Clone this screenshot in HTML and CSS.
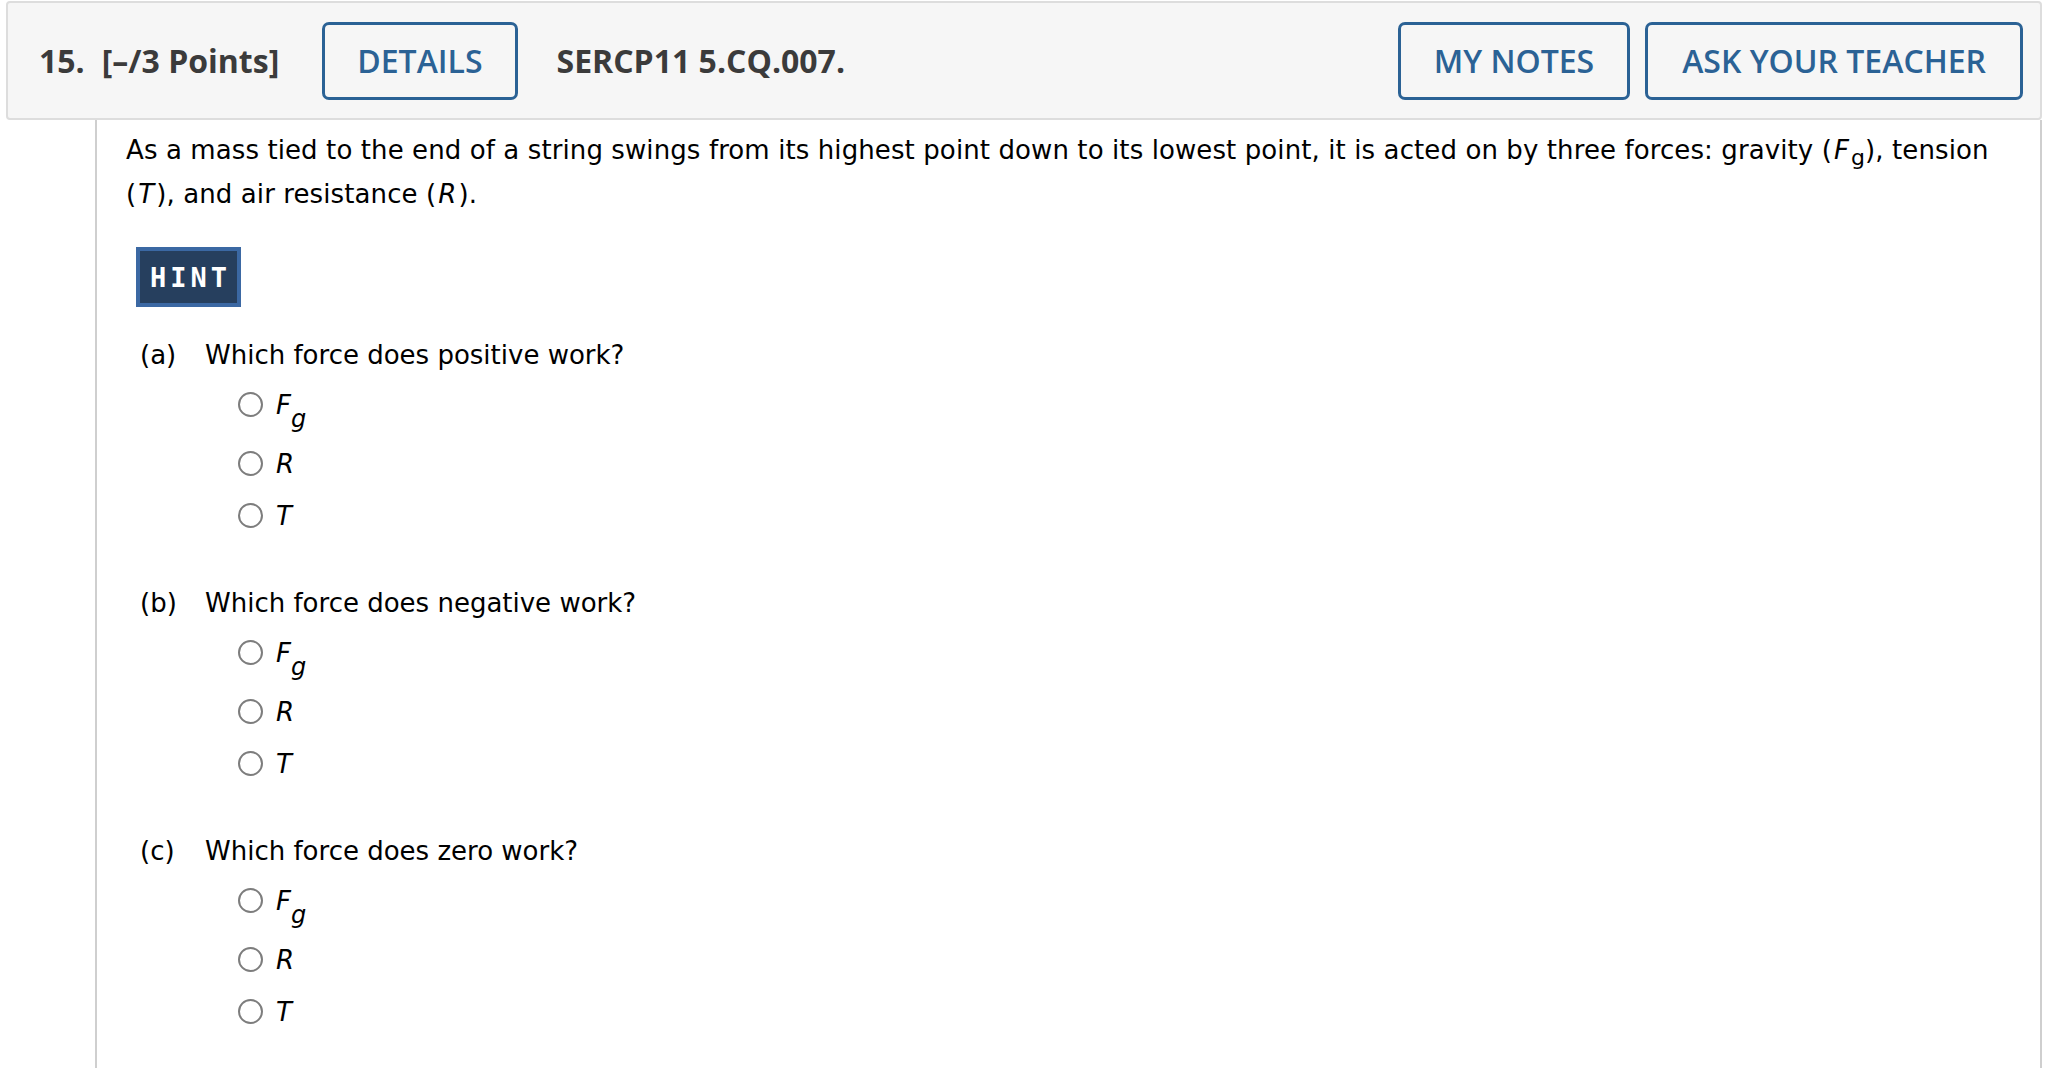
FILE: index.html
```html
<!DOCTYPE html>
<html lang="en">
<head>
    <meta charset="UTF-8">
    <meta name="viewport" content="width=device-width, initial-scale=1.0">
    <title>SERCP11 5.CQ.007.</title>
    <link rel="stylesheet" href="styles.css">
</head>
<body>
    <div class="question">
        <div class="q-header">
            <span class="q-num">15.</span>
            <span class="q-points">[–/3 Points]</span>
            <button class="q-btn q-details">DETAILS</button>
            <span class="q-code">SERCP11 5.CQ.007.</span>
            <div class="q-actions">
                <button class="q-btn">MY NOTES</button>
                <button class="q-btn">ASK YOUR TEACHER</button>
            </div>
        </div>

        <div class="q-body">
            <p class="prompt">As a mass tied to the end of a string swings from its highest point down to its lowest point, it is acted on by three forces: gravity (<i>F</i><sub>g</sub>), tension (<i>T</i>), and air resistance (<i>R</i>).</p>

            <button class="hint">HINT</button>

            <div class="part">
                <div class="part-q"><span class="part-label">(a)</span>Which force does positive work?</div>
                <ul class="choices">
                    <li><span class="radio"></span><i>F<sub>g</sub></i></li>
                    <li><span class="radio"></span><i>R</i></li>
                    <li><span class="radio"></span><i>T</i></li>
                </ul>
            </div>

            <div class="part">
                <div class="part-q"><span class="part-label">(b)</span>Which force does negative work?</div>
                <ul class="choices">
                    <li><span class="radio"></span><i>F<sub>g</sub></i></li>
                    <li><span class="radio"></span><i>R</i></li>
                    <li><span class="radio"></span><i>T</i></li>
                </ul>
            </div>

            <div class="part">
                <div class="part-q"><span class="part-label">(c)</span>Which force does zero work?</div>
                <ul class="choices">
                    <li><span class="radio"></span><i>F<sub>g</sub></i></li>
                    <li><span class="radio"></span><i>R</i></li>
                    <li><span class="radio"></span><i>T</i></li>
                </ul>
            </div>
        </div>
    </div>
</body>
</html>
```

FILE: styles.css
```css
body {
    margin: 0;
    padding: 0;
    background: #fff;
    font-family: "DejaVu Sans", Verdana, sans-serif;
    color: #000;
}
.question {
    margin: 1px 12px 0 6px;
}
.q-header {
    display: flex;
    align-items: center;
    height: 115px;
    padding: 0 17px 0 31px;
    background: #f6f6f6;
    border: 2px solid #dddddd;
    border-radius: 4px;
    font-family: "Open Sans", sans-serif;
}
.q-num, .q-points, .q-code {
    font-size: 32px;
    font-weight: 700;
    color: #3b3b3b;
}
.q-points { margin-left: 17px; }
.q-btn {
    height: 78px;
    padding: 0 34px;
    border: 3px solid #2b6295;
    border-radius: 7px;
    background: transparent;
    color: #2b6295;
    font-family: "Open Sans", sans-serif;
    font-size: 32px;
    font-weight: 600;
    cursor: pointer;
}
.q-btn.q-details {
    margin: 0 39px 0 43px;
    padding: 0 32px;
}
.q-actions {
    display: flex;
    gap: 15px;
    margin-left: auto;
}
.q-actions .q-btn:first-child { padding: 0 33px; }
.q-body {
    margin-left: 89px;
    border-left: 2px solid #cfcfcf;
    border-right: 2px solid #cfcfcf;
    padding: 8px 29px 40px 29px;
    font-size: 26px;
    line-height: 44px;
}
.prompt {
    margin: 0;
    letter-spacing: 0.1px;
}
.prompt i { padding: 0 2px; }
.prompt sub {
    font-size: 22px;
    line-height: 0;
}
.hint {
    display: block;
    margin: 31px 0 0 10px;
    width: 105px;
    height: 60px;
    padding: 0;
    background: #263f5e;
    border: 4px solid #3b68a3;
    color: #fff;
    font-family: "DejaVu Sans Mono", monospace;
    font-size: 27px;
    font-weight: bold;
    letter-spacing: 4px;
    text-indent: 4px;
    cursor: pointer;
}
.part {
    margin: 26px 0 0 14px;
}
.part + .part { margin-top: 43px; }
.part-label {
    display: inline-block;
    width: 65px;
}
.choices {
    list-style: none;
    margin: 6px 0 0 0;
    padding: 0 0 0 98px;
}
.choices li {
    display: flex;
    align-items: flex-start;
    margin-bottom: 8px;
}
.radio {
    flex: none;
    width: 21px;
    height: 21px;
    margin: 9px 13px 0 0;
    border: 2px solid #7d7d7d;
    border-radius: 50%;
    background: #fff;
}
.choices sub {
    font-size: 24px;
    line-height: 30px;
    vertical-align: -13px;
}
```
